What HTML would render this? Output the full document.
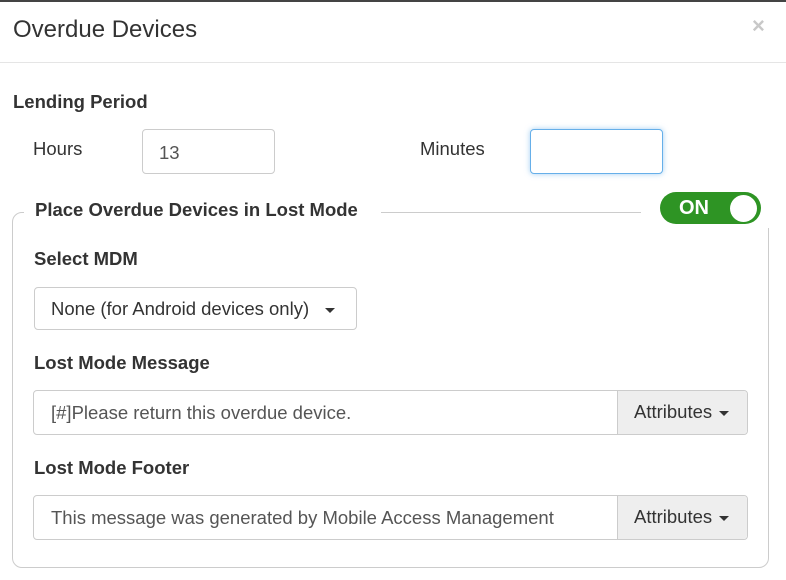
<!DOCTYPE html>
<html><head><style>
*{box-sizing:border-box;margin:0;padding:0}
body{width:786px;height:580px;background:#fff;font-family:"Liberation Sans",sans-serif;color:#333;position:relative;overflow:hidden}
.a{position:absolute;white-space:nowrap}
.inp{position:absolute;border:1px solid #ccc;border-radius:4px;background:#fff;font-size:18.5px;color:#555}
.b{font-weight:bold;font-size:18.5px;color:#333}
.caret{display:inline-block;width:0;height:0;border-left:5px solid transparent;border-right:5px solid transparent;border-top:5px solid #333;vertical-align:middle;margin-left:7px}
</style></head><body>
<div class="a" style="left:0;top:0;width:786px;height:2px;background:#444"></div>
<div class="a" style="left:13px;top:16px;font-size:24px;color:#333">Overdue Devices</div>
<div class="a" style="left:752px;top:13px;font-size:22px;font-weight:bold;color:#c8c8c8">×</div>
<div class="a" style="left:0;top:62px;width:786px;height:1px;background:#e5e5e5"></div>
<div class="a b" style="left:13px;top:91px">Lending Period</div>
<div class="a" style="left:33px;top:138px;font-size:18.5px">Hours</div>
<div class="inp" style="left:142px;top:129px;width:133px;height:45px;padding:12px 0 0 16px">13</div>
<div class="a" style="left:420px;top:138px;font-size:18.5px">Minutes</div>
<div class="inp" style="left:530px;top:129px;width:133px;height:45px;border-color:#66afe9;box-shadow:0 0 6px rgba(102,175,233,.6)"></div>
<div class="a" style="left:12px;top:212px;width:757px;height:356px;border:1px solid #ccc;border-radius:10px"></div>
<div class="a" style="left:24px;top:200px;width:750px;height:28px;background:#fff"></div>
<div class="a" style="left:381px;top:212px;width:260px;height:1px;background:#ccc"></div>
<div class="a b" style="left:35px;top:199px">Place Overdue Devices in Lost Mode</div>
<div class="a" style="left:660px;top:192px;width:101px;height:32px;border-radius:16px;background:#2e9424"></div>
<div class="a" style="left:679px;top:197px;font-size:20px;font-weight:bold;color:#fff">ON</div>
<div class="a" style="left:730px;top:195px;width:27px;height:27px;border-radius:50%;background:#fff"></div>
<div class="a b" style="left:34px;top:248px">Select MDM</div>
<div class="inp" style="left:34px;top:287px;width:323px;height:43px;padding:10px 0 0 16px;color:#333">None (for Android devices only)<span class="caret" style="margin-left:16px"></span></div>
<div class="a b" style="left:34px;top:352px">Lost Mode Message</div>
<div class="inp" style="left:33px;top:390px;width:715px;height:45px;padding:11px 0 0 17px">[#]Please return this overdue device.</div>
<div class="a" style="left:617px;top:391px;width:130px;height:43px;background:#eee;border-left:1px solid #ccc;border-radius:0 4px 4px 0;font-size:18.5px;padding:10px 0 0 16px;color:#333">Attributes<span class="caret"></span></div>
<div class="a b" style="left:34px;top:457px">Lost Mode Footer</div>
<div class="inp" style="left:33px;top:495px;width:715px;height:45px;padding:11px 0 0 17px">This message was generated by Mobile Access Management</div>
<div class="a" style="left:617px;top:496px;width:130px;height:43px;background:#eee;border-left:1px solid #ccc;border-radius:0 4px 4px 0;font-size:18.5px;padding:10px 0 0 16px;color:#333">Attributes<span class="caret"></span></div>
</body></html>
